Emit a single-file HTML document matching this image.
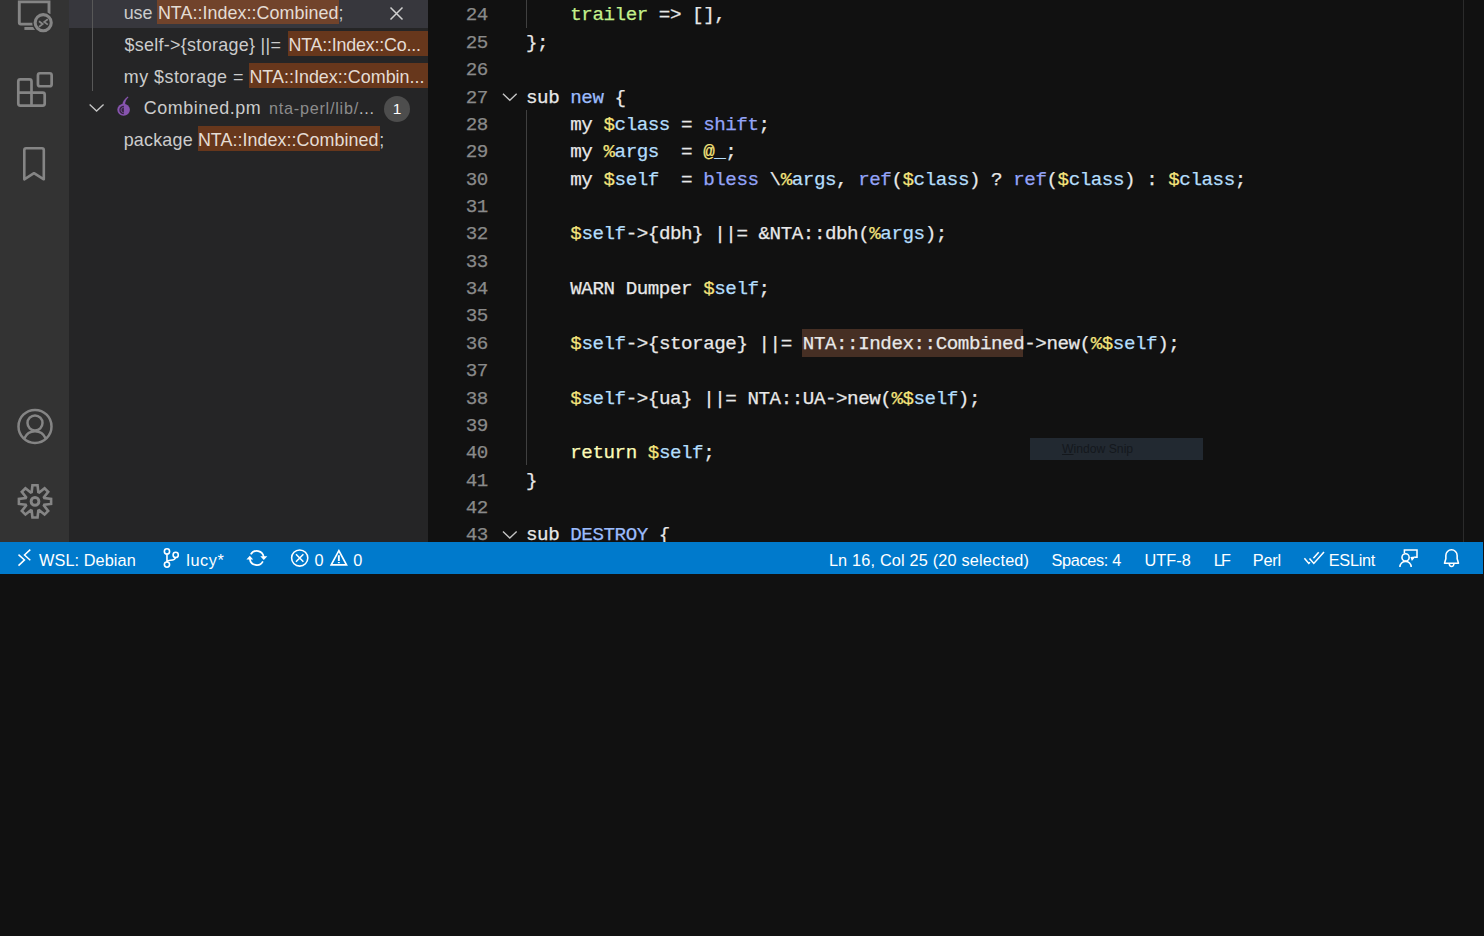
<!DOCTYPE html>
<html lang="en">
<head>
<meta charset="utf-8">
<title>VS Code - Combined.pm</title>
<style>
html,body{margin:0;padding:0;}
body{width:1484px;height:936px;background:#111111;overflow:hidden;position:relative;font-family:"Liberation Sans",sans-serif;}
.abs{position:absolute;}
#activity{left:0;top:0;width:69px;height:542px;background:#333333;}
#sidebar{left:69px;top:0;width:359px;height:542px;background:#252526;overflow:hidden;}
#editor{left:428px;top:0;width:1056px;height:542px;background:#111111;overflow:hidden;}
#status{left:0;top:542px;width:1483px;height:32px;background:#007acc;overflow:hidden;}
/* sidebar */
.row{position:absolute;left:0;width:359px;height:31.68px;}
.st{position:absolute;white-space:pre;font-size:18.72px;line-height:31.68px;color:#cccccc;top:0;height:31.68px;}
.hl{position:absolute;background:#67371c;height:25px;}
/* editor */
.ln{position:absolute;left:0;width:59.8px;text-align:right;color:#8a8a8a;-webkit-text-stroke:0.25px;font-family:"Liberation Mono",monospace;font-size:19.2px;letter-spacing:-0.443px;padding-top:2.2px;line-height:27.36px;height:27.36px;white-space:pre;}
.cl{position:absolute;left:98px;color:#e8e8e8;-webkit-text-stroke:0.25px;font-family:"Liberation Mono",monospace;font-size:19.2px;letter-spacing:-0.443px;padding-top:2.2px;line-height:27.36px;height:27.36px;white-space:pre;}
.v{color:#f4e47c;} /* sigil */
.n{color:#b4defc;} /* variable name */
.f{color:#94a4f8;} /* builtin func */
.k{color:#c4f08c;} /* hash key */
.fn,.fd{color:#9cbcfc;} /* sub name */
.r{color:#fcfcb8;} /* return */
.guide{position:absolute;width:1px;background:#404040;}
/* status */
.sb{position:absolute;top:1.5px;height:32px;line-height:32px;font-size:16.3px;color:#ffffff;white-space:pre;}
svg{position:absolute;overflow:visible;}
</style>
</head>
<body>
<div id="activity" class="abs">
<svg style="left:0;top:0" width="69" height="40" viewBox="0 0 69 40"><path d="M49 14 V1.9 H19.3 V22.6 Q19.3 24.1 20.8 24.1 H33" fill="none" stroke="#858585" stroke-width="2.9"/><path d="M24.4 28.45 H35" stroke="#858585" stroke-width="3" fill="none"/><circle cx="43.2" cy="22.7" r="10.9" fill="#333333"/><circle cx="43.2" cy="22.7" r="8.05" fill="#333333" stroke="#858585" stroke-width="3.1"/><path d="M39 21.3 L42.65 24.05 L39 26.9 M47.85 19.2 L44.2 21.9 L47.85 24.6" fill="none" stroke="#858585" stroke-width="1.8"/></svg>
<svg style="left:0;top:60px" width="69" height="60" viewBox="0 60 69 60"><path d="M18.3 92.65 V81.4 Q18.3 79.4 20.3 79.4 H29.5 Q31.5 79.4 31.5 81.4 V105.55 M18.3 92.65 H42.7 Q44.7 92.65 44.7 94.65 V103.55 Q44.7 105.55 42.7 105.55 H20.3 Q18.3 105.55 18.3 103.55 V92.65" fill="none" stroke="#858585" stroke-width="2.7"/><rect x="37.95" y="73.25" width="13.7" height="13" rx="2" fill="none" stroke="#858585" stroke-width="2.7"/></svg>
<svg style="left:0;top:140px" width="69" height="50" viewBox="0 140 69 50"><path d="M24.3 179.3 V150 Q24.3 148.3 26 148.3 H42 Q43.8 148.3 43.8 150 V179.3 L34 173.2 L24.3 179.3 Z" fill="none" stroke="#858585" stroke-width="2.6" stroke-linejoin="round"/></svg>
<svg style="left:0;top:400px" width="69" height="55" viewBox="0 400 69 55"><circle cx="35" cy="426.4" r="16.5" fill="none" stroke="#858585" stroke-width="2.5"/><circle cx="35" cy="423" r="7.5" fill="none" stroke="#858585" stroke-width="2.5"/><path d="M24.3 438.5 C26.5 433.5 30.5 431.3 35 431.3 C39.5 431.3 43.5 433.5 45.7 438.5" fill="none" stroke="#858585" stroke-width="2.5"/></svg>
<svg style="left:0;top:475px" width="69" height="55" viewBox="0 475 69 55"><path d="M31.68 492.07 L32.45 485.30 L37.55 485.30 L38.32 492.07 L39.25 492.46 L44.58 488.21 L48.19 491.82 L43.94 497.15 L44.33 498.08 L51.10 498.85 L51.10 503.95 L44.33 504.72 L43.94 505.65 L48.19 510.98 L44.58 514.59 L39.25 510.34 L38.32 510.73 L37.55 517.50 L32.45 517.50 L31.68 510.73 L30.75 510.34 L25.42 514.59 L21.81 510.98 L26.06 505.65 L25.67 504.72 L18.90 503.95 L18.90 498.85 L25.67 498.08 L26.06 497.15 L21.81 491.82 L25.42 488.21 L30.75 492.46 Z" fill="none" stroke="#858585" stroke-width="2.6" stroke-linejoin="miter"/><circle cx="35" cy="501.4" r="3.9" fill="none" stroke="#858585" stroke-width="2.9"/></svg>
</div>
<div id="sidebar" class="abs">
<div class="abs" style="left:0;top:-3.68px;width:359px;height:31.68px;background:#37373d"></div>
<div class="abs" style="left:23px;top:0;width:1px;height:91.36px;background:#585858"></div>
<div class="hl" style="left:88px;top:-0.68px;width:182px;background:#71432b"></div>
<div class="hl" style="left:219px;top:31.00px;width:140px"></div>
<div class="hl" style="left:180px;top:62.68px;width:179px"></div>
<div class="hl" style="left:129px;top:126.04px;width:182px"></div>
<div class="st" id="t0" style="left:54.80px;top:-1.68px;color:#cccccc;font-size:17.9px;letter-spacing:-0.153px">use</div>
<div class="st" id="t1" style="left:88.90px;top:-1.68px;color:#e4dcd4;font-size:17.9px;letter-spacing:0.042px">NTA::Index::Combined</div>
<div class="st" id="t2" style="left:269.60px;top:-1.68px;color:#cccccc;font-size:17.9px;letter-spacing:0.000px">;</div>
<div class="st" id="t3" style="left:55.40px;top:30.00px;color:#cccccc;font-size:17.9px;letter-spacing:0.318px">$self-&gt;{storage} ||=</div>
<div class="st" id="t4" style="left:219.50px;top:30.00px;color:#e4dcd4;font-size:17.9px;letter-spacing:-0.211px">NTA::Index::Co...</div>
<div class="st" id="t5" style="left:54.80px;top:61.68px;color:#cccccc;font-size:17.9px;letter-spacing:0.479px">my $storage =</div>
<div class="st" id="t6" style="left:180.40px;top:61.68px;color:#e4dcd4;font-size:17.9px;letter-spacing:0.025px">NTA::Index::Combin...</div>
<div class="st" id="t7" style="left:74.80px;top:93.36px;color:#cccccc;font-size:17.9px;letter-spacing:0.548px">Combined.pm</div>
<div class="st" id="t8" style="left:200.00px;top:93.36px;color:#8c8c8c;font-size:16.2px;letter-spacing:0.756px">nta-perl/lib/</div>
<div class="st" id="t9" style="left:290.10px;top:93.36px;color:#c0c0c0;font-size:16.2px;letter-spacing:0.700px">...</div>
<div class="st" id="t10" style="left:54.70px;top:125.04px;color:#cccccc;font-size:17.9px;letter-spacing:0.208px">package</div>
<div class="st" id="t11" style="left:128.90px;top:125.04px;color:#e4dcd4;font-size:17.9px;letter-spacing:0.042px">NTA::Index::Combined</div>
<div class="st" id="t12" style="left:310.20px;top:125.04px;color:#cccccc;font-size:17.9px;letter-spacing:0.000px">;</div>
<div class="abs" style="left:315px;top:96.16px;width:26px;height:26px;border-radius:13px;background:#4d4d4d;color:#fff;font-size:15.5px;line-height:26.5px;text-align:center">1</div>
<svg style="left:320.9px;top:6.699999999999999px" width="13" height="13" viewBox="0 0 13 13"><path d="M0.5 0.5 L12.5 12.5 M12.5 0.5 L0.5 12.5" stroke="#d0d0d0" stroke-width="1.5" fill="none"/></svg>
<svg style="left:0;top:0" width="10" height="10" viewBox="0 0 10 10"><path d="M20.65 104.56 L27.60 111.06 L34.55 104.56" fill="none" stroke="#c5c5c5" stroke-width="1.35"/></svg>
<svg style="left:39px;top:92px" width="32" height="32" viewBox="108 92 32 32"><ellipse cx="123.6" cy="109.8" rx="6.3" ry="6.0" fill="#8754ae"/><path d="M122.3 105 C122.4 101.6 124.3 99 127.7 96.4 L128.5 97.3 C126.1 99.6 124.9 101.7 125.2 105 Z" fill="#8754ae"/><path d="M123.9 105.7 C120.6 105.7 119.3 108 119.3 109.9 C119.3 112.3 121 114 123.9 114.2 Z" fill="#35263f"/><path d="M123.6 107.4 C121.8 107.7 121 109 121.1 110.2 C121.2 111.5 122.1 112.5 123.6 112.7" fill="none" stroke="#8754ae" stroke-width="0.9"/></svg>
</div>
<div id="editor" class="abs">
<div class="abs" style="left:374px;top:328.62px;width:221px;height:28.36px;background:#462f24"></div>
<div class="guide" style="left:98px;top:0;height:27.66px"></div>
<div class="guide" style="left:98px;top:109.74px;height:355.68px"></div>
<div class="ln" style="top:0.30px">24</div>
<div class="cl" style="top:0.30px">    <span class="k">trailer</span> =&gt; [],</div>
<div class="ln" style="top:27.66px">25</div>
<div class="cl" style="top:27.66px">};</div>
<div class="ln" style="top:55.02px">26</div>
<div class="ln" style="top:82.38px">27</div>
<div class="cl" style="top:82.38px">sub <span class="fn">new</span> {</div>
<div class="ln" style="top:109.74px">28</div>
<div class="cl" style="top:109.74px">    my <span class="v">$</span><span class="n">class</span> = <span class="f">shift</span>;</div>
<div class="ln" style="top:137.10px">29</div>
<div class="cl" style="top:137.10px">    my <span class="v">%</span><span class="n">args</span>  = <span class="v">@</span><span class="n">_</span>;</div>
<div class="ln" style="top:164.46px">30</div>
<div class="cl" style="top:164.46px">    my <span class="v">$</span><span class="n">self</span>  = <span class="f">bless</span> \<span class="v">%</span><span class="n">args</span>, <span class="f">ref</span>(<span class="v">$</span><span class="n">class</span>) ? <span class="f">ref</span>(<span class="v">$</span><span class="n">class</span>) : <span class="v">$</span><span class="n">class</span>;</div>
<div class="ln" style="top:191.82px">31</div>
<div class="ln" style="top:219.18px">32</div>
<div class="cl" style="top:219.18px">    <span class="v">$</span><span class="n">self</span>-&gt;{dbh} ||= &amp;NTA::dbh(<span class="v">%</span><span class="n">args</span>);</div>
<div class="ln" style="top:246.54px">33</div>
<div class="ln" style="top:273.90px">34</div>
<div class="cl" style="top:273.90px">    WARN Dumper <span class="v">$</span><span class="n">self</span>;</div>
<div class="ln" style="top:301.26px">35</div>
<div class="ln" style="top:328.62px">36</div>
<div class="cl" style="top:328.62px">    <span class="v">$</span><span class="n">self</span>-&gt;{storage} ||= NTA::Index::Combined-&gt;new(<span class="v">%$</span><span class="n">self</span>);</div>
<div class="ln" style="top:355.98px">37</div>
<div class="ln" style="top:383.34px">38</div>
<div class="cl" style="top:383.34px">    <span class="v">$</span><span class="n">self</span>-&gt;{ua} ||= NTA::UA-&gt;new(<span class="v">%$</span><span class="n">self</span>);</div>
<div class="ln" style="top:410.70px">39</div>
<div class="ln" style="top:438.06px">40</div>
<div class="cl" style="top:438.06px">    <span class="r">return</span> <span class="v">$</span><span class="n">self</span>;</div>
<div class="ln" style="top:465.42px">41</div>
<div class="cl" style="top:465.42px">}</div>
<div class="ln" style="top:492.78px">42</div>
<div class="ln" style="top:520.14px">43</div>
<div class="cl" style="top:520.14px">sub <span class="fd">DESTROY</span> {</div>
<svg style="left:0;top:0" width="10" height="10" viewBox="0 0 10 10"><path d="M74.95 93.68 L81.80 100.28 L88.65 93.68" fill="none" stroke="#c5c5c5" stroke-width="1.35"/></svg>
<svg style="left:0;top:0" width="10" height="10" viewBox="0 0 10 10"><path d="M74.95 531.44 L81.80 538.04 L88.65 531.44" fill="none" stroke="#c5c5c5" stroke-width="1.35"/></svg>
<div class="abs" style="left:602px;top:438px;width:173px;height:22px;background:#222931"></div>
<div class="abs" style="left:634px;top:438px;height:22px;line-height:22px;font-size:12.2px;color:#14181d;white-space:pre"><u>W</u>indow Snip</div>
<div class="abs" style="left:1035px;top:0;width:1px;height:542px;background:#2b2b2b"></div>
</div>
<div id="status" class="abs">
<div class="sb" id="t13" style="left:39.10px;letter-spacing:0.069px">WSL: Debian</div>
<div class="sb" id="t14" style="left:186.30px;letter-spacing:0.541px">lucy*</div>
<div class="sb" id="t15" style="left:314.40px;letter-spacing:0.000px">0</div>
<div class="sb" id="t16" style="left:353.20px;letter-spacing:0.000px">0</div>
<div class="sb" id="t17" style="left:828.90px;letter-spacing:0.178px">Ln 16, Col 25 (20 selected)</div>
<div class="sb" id="t18" style="left:1051.40px;letter-spacing:-0.314px">Spaces: 4</div>
<div class="sb" id="t19" style="left:1144.40px;letter-spacing:0.055px">UTF-8</div>
<div class="sb" id="t20" style="left:1213.80px;letter-spacing:-1.808px">LF</div>
<div class="sb" id="t21" style="left:1252.70px;letter-spacing:-0.167px">Perl</div>
<div class="sb" id="t22" style="left:1328.80px;letter-spacing:-0.297px">ESLint</div>
<svg style="left:0;top:0" width="1484" height="32" viewBox="0 0 1484 32"><path d="M18.5 12.6 L24.5 17.9 L18.5 23.6 M30.3 7.6 L24.5 13 L30.3 18.3" fill="none" stroke="#ffffff" stroke-width="1.5" /><circle cx="166.97" cy="9.4" r="2.6" fill="none" stroke="#ffffff" stroke-width="1.6"/><circle cx="166.97" cy="22.6" r="2.6" fill="none" stroke="#ffffff" stroke-width="1.6"/><circle cx="175.7" cy="12.9" r="2.6" fill="none" stroke="#ffffff" stroke-width="1.6"/><path d="M166.97 11.9 V20.1 M175.4 15.5 C175.2 17.9 173 18.1 170.5 18.2 C169 18.3 167.6 18.7 167 19.8" fill="none" stroke="#ffffff" stroke-width="1.6" /><path d="M250.8 12.4 A6.95 6.95 0 0 1 263.7 15.0 M262.9 19.3 A6.95 6.95 0 0 1 249.85 16.8" fill="none" stroke="#ffffff" stroke-width="1.75" /><path d="M260.3 14.3 H267.3 L263.8 18.1 Z M246.4 17.4 H253.2 L249.8 13.7 Z" fill="#ffffff"/><circle cx="299.7" cy="16" r="8.1" fill="none" stroke="#ffffff" stroke-width="1.55"/><path d="M296 12.3 L303.4 19.7 M303.4 12.3 L296 19.7" fill="none" stroke="#ffffff" stroke-width="1.55" /><path d="M338.85 8.7 L346.5 22.9 H331.2 Z" fill="none" stroke="#ffffff" stroke-width="1.7" stroke-linejoin="miter"/><path d="M338.85 13.2 V19 M338.85 19.9 V21.2" fill="none" stroke="#ffffff" stroke-width="1.9" /><path d="M1309.5 16.4 L1313.8 21.4 L1324.0 10.1 M1304.4 16.2 L1308.8 21.4 L1310.0 20.2 M1313.4 16.2 L1318.7 10.3" fill="none" stroke="#ffffff" stroke-width="1.55" /><path d="M1404.4 11 V7.9 H1417.0 V15.2 H1414.5" fill="none" stroke="#ffffff" stroke-width="1.55" /><path d="M1410.4 15.0 L1415.6 14.6 L1411.9 19 Z" fill="#ffffff"/><circle cx="1405.56" cy="15.4" r="3.6" fill="none" stroke="#ffffff" stroke-width="1.55"/><path d="M1399.9 25 A5.65 5.65 0 0 1 1411.2 25" fill="none" stroke="#ffffff" stroke-width="1.55" /><path d="M1445.85 16.8 V13.5 A5.65 5.65 0 0 1 1457.15 13.5 V16.8 L1458.5 21.2 H1444.5 Z" fill="none" stroke="#ffffff" stroke-width="1.55" stroke-linejoin="round"/><path d="M1449.3 21.8 A2.3 2.6 0 0 0 1453.9 21.8" fill="none" stroke="#ffffff" stroke-width="1.5" /></svg>
</div>
</body>
</html>
